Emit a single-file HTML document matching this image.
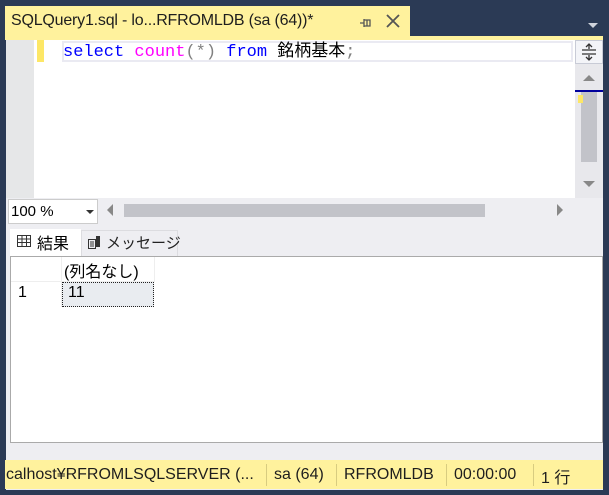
<!DOCTYPE html>
<html><head><meta charset="utf-8"><style>
*{margin:0;padding:0;box-sizing:border-box}
body{width:609px;height:495px;background:#2b3a55;position:relative;overflow:hidden;font-family:"Liberation Sans","Noto Sans CJK JP",sans-serif}
.a{position:absolute}
</style></head><body>
<div class="a" style="left:6px;top:40px;width:597px;height:450px;background:#eeeef2"></div>
<!-- tab -->
<div class="a" style="left:5px;top:6px;width:405px;height:33px;background:#fff29d"></div>
<div class="a" style="left:5px;top:36px;width:598px;height:4px;background:#fff29d"></div>
<div class="a" style="left:11px;top:12px;font-size:16px;color:#1e1e1e;white-space:nowrap;letter-spacing:-0.2px">SQLQuery1.sql - lo...RFROMLDB (sa (64))*</div>
<svg class="a" style="left:359px;top:17px" width="14" height="12"><path d="M1 6H5M5 2V10M5 3H11V9H5M8 3V9" stroke="#555" stroke-width="1.3" fill="none"/></svg>
<svg class="a" style="left:385px;top:13px" width="16" height="16"><path d="M2 2L14 14M14 2L2 14" stroke="#555" stroke-width="1.8"/></svg>
<div class="a" style="left:588px;top:23px;width:0;height:0;border-left:5px solid transparent;border-right:5px solid transparent;border-top:5px solid #cfd3dc"></div>
<!-- editor -->
<div class="a" style="left:6px;top:40px;width:28px;height:158px;background:#e6e7e8"></div>
<div class="a" style="left:34px;top:40px;width:541px;height:158px;background:#fff"></div>
<div class="a" style="left:37px;top:40px;width:7px;height:22px;background:#fde766"></div>
<div class="a" style="left:62px;top:41px;width:511px;height:21px;border:2px solid #eaeaf2"></div>
<div class="a" style="left:63px;top:36px;font-family:'Liberation Mono','Noto Sans CJK JP',monospace;font-size:17px;white-space:nowrap;color:#000">
<span style="color:#0000ff">select</span> <span style="color:#ff00ff">count</span><span style="color:#808080">(*)</span> <span style="color:#0000ff">from</span> 銘柄基本<span style="color:#808080">;</span></div>
<!-- v scrollbar -->
<div class="a" style="left:575px;top:40px;width:28px;height:158px;background:#e8e8ec"></div>
<div class="a" style="left:575px;top:40px;width:28px;height:24px;background:#f3f4f8;border:1px solid #c8cbd6"></div>
<svg class="a" style="left:580px;top:42px" width="18" height="20"><path d="M2 8H16M2 12H16M9 2V7M9 13V18M6 5L9 2L12 5M6 15L9 18L12 15" stroke="#333" stroke-width="1.3" fill="none"/></svg>
<div class="a" style="left:583px;top:75px;width:0;height:0;border-left:6px solid transparent;border-right:6px solid transparent;border-bottom:6px solid #888"></div>
<div class="a" style="left:575px;top:90px;width:28px;height:2px;background:#00009c"></div>
<div class="a" style="left:581px;top:92px;width:16px;height:70px;background:#c2c3c9"></div>
<div class="a" style="left:578px;top:95px;width:5px;height:8px;background:#fde766"></div>
<div class="a" style="left:583px;top:181px;width:0;height:0;border-left:6px solid transparent;border-right:6px solid transparent;border-top:6px solid #888"></div>
<!-- h bar -->
<div class="a" style="left:8px;top:199px;width:90px;height:25px;background:#fff;border:1px solid #ccc"></div>
<div class="a" style="left:11px;top:203px;font-size:15px;color:#000">100 %</div>
<div class="a" style="left:86px;top:210px;width:0;height:0;border-left:4px solid transparent;border-right:4px solid transparent;border-top:4px solid #333"></div>
<div class="a" style="left:107px;top:204px;width:0;height:0;border-top:6px solid transparent;border-bottom:6px solid transparent;border-right:6px solid #888"></div>
<div class="a" style="left:124px;top:204px;width:361px;height:13px;background:#c2c3c9"></div>
<div class="a" style="left:557px;top:204px;width:0;height:0;border-top:6px solid transparent;border-bottom:6px solid transparent;border-left:6px solid #888"></div>
<!-- result tabs -->
<div class="a" style="left:10px;top:229px;width:71px;height:27px;background:#fff"></div>
<div class="a" style="left:81px;top:230px;width:97px;height:26px;background:#eeeef2;border:1px solid #dcdce0;border-bottom:none"></div>
<svg class="a" style="left:17px;top:235px" width="14" height="12"><path d="M0.5 0.5H13.5V11.5H0.5ZM0.5 4H13.5M0.5 7.5H13.5M5 0.5V11.5M9.5 0.5V11.5" stroke="#333" fill="none"/></svg>
<div class="a" style="left:37px;top:230px;font-size:16px;color:#000">結果</div>
<svg class="a" style="left:88px;top:236px" width="12" height="13"><path d="M0.5 3.5H7.5V12.5H0.5ZM2 6H6M2 8H6M2 10H6" stroke="#333" fill="none"/><rect x="8" y="0" width="4" height="11" fill="#333"/></svg>
<div class="a" style="left:106px;top:232px;font-size:15px;color:#222">メッセージ</div>
<!-- grid -->
<div class="a" style="left:10px;top:256px;width:593px;height:187px;background:#fff;border:1px solid #aaa"></div>
<div class="a" style="left:61px;top:257px;width:1px;height:50px;background:#eee"></div>
<div class="a" style="left:11px;top:281px;width:143px;height:1px;background:#eee"></div>
<div class="a" style="left:154px;top:257px;width:1px;height:25px;background:#eee"></div>
<div class="a" style="left:64px;top:258px;font-size:16px;color:#000">(列名なし)</div>
<div class="a" style="left:62px;top:282px;width:92px;height:25px;background:#e9ecf0;border:1px dotted #222"></div>
<div class="a" style="left:68px;top:284px;font-size:16px;color:#000">11</div>
<div class="a" style="left:18px;top:284px;font-size:16px;color:#000">1</div>
<!-- status -->
<div class="a" style="left:5px;top:460px;width:598px;height:29px;background:#fff29d"></div>
<div class="a" style="left:6px;top:466px;font-size:16px;color:#1e1e1e;white-space:nowrap">calhost¥RFROMLSQLSERVER (...</div>
<div class="a" style="left:266px;top:464px;width:1px;height:22px;background:#d8cc80"></div>
<div class="a" style="left:274px;top:466px;font-size:16px;color:#1e1e1e">sa (64)</div>
<div class="a" style="left:336px;top:464px;width:1px;height:22px;background:#d8cc80"></div>
<div class="a" style="left:344px;top:466px;font-size:16px;color:#1e1e1e">RFROMLDB</div>
<div class="a" style="left:446px;top:464px;width:1px;height:22px;background:#d8cc80"></div>
<div class="a" style="left:454px;top:466px;font-size:16px;color:#1e1e1e">00:00:00</div>
<div class="a" style="left:533px;top:464px;width:1px;height:22px;background:#d8cc80"></div>
<div class="a" style="left:541px;top:464px;font-size:16px;color:#1e1e1e;white-space:nowrap">1 行</div>
</body></html>
